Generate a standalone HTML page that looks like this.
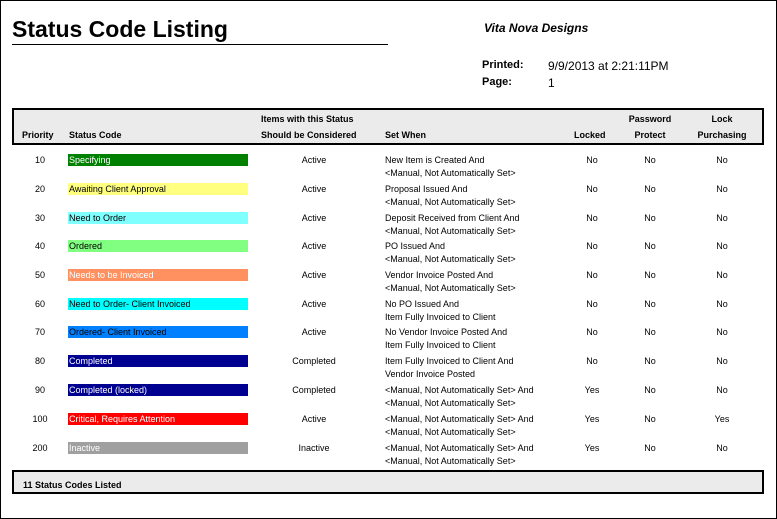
<!DOCTYPE html>
<html><head><meta charset="utf-8"><style>
*{margin:0;padding:0;box-sizing:border-box}
body{width:777px;height:519px;position:relative;background:#fff;font-family:"Liberation Sans",Arial,sans-serif;color:#000;overflow:hidden}
.a{position:absolute;white-space:nowrap}
.frame{position:absolute;left:0;top:0;width:777px;height:519px;border:1px solid #000}
.box{position:absolute;left:12px;width:752px;background:#ebebeb;border:2px solid #000}
.h{font-size:9px;font-weight:bold;line-height:13px}
.r{font-size:9px;line-height:13px}
.bar{position:absolute;left:68px;width:180px;height:12px;font-size:9px;line-height:12px;padding-left:1px;white-space:nowrap}
.c{text-align:center}
.rows{position:absolute;left:0;top:1px;width:777px;height:470px}
</style></head><body>
<div class="frame"></div>
<div class="a" style="left:12px;top:14px;font-size:23px;font-weight:bold;line-height:30px">Status Code Listing</div>
<div class="a" style="left:12px;top:44px;width:376px;height:1px;background:#000"></div>
<div class="a" style="left:484px;top:21px;font-size:12px;font-weight:bold;font-style:italic">Vita Nova Designs</div>
<div class="a" style="left:482px;top:59px;font-size:11px;font-weight:bold">Printed:</div>
<div class="a" style="left:548px;top:59px;font-size:12px">9/9/2013 at 2:21:11PM</div>
<div class="a" style="left:482px;top:76px;font-size:11px;font-weight:bold">Page:</div>
<div class="a" style="left:548px;top:76px;font-size:12px">1</div>

<div class="box" style="top:108px;height:37px"></div>
<div class="a h" style="left:22px;top:129px">Priority</div>
<div class="a h" style="left:69px;top:129px">Status Code</div>
<div class="a h" style="left:261px;top:113px">Items with this Status</div>
<div class="a h" style="left:261px;top:129px">Should be Considered</div>
<div class="a h" style="left:385px;top:129px">Set When</div>
<div class="a h" style="left:574px;top:129px">Locked</div>
<div class="a h c" style="left:615px;width:70px;top:113px">Password</div>
<div class="a h c" style="left:615px;width:70px;top:129px">Protect</div>
<div class="a h c" style="left:687px;width:70px;top:113px">Lock</div>
<div class="a h c" style="left:687px;width:70px;top:129px">Purchasing</div>

<div class="rows">
<div class="a r c" style="left:20px;width:40px;top:153px">10</div>
<div class="bar" style="top:153px;background:#008000;color:#fff">Specifying</div>
<div class="a r c" style="left:274px;width:80px;top:153px">Active</div>
<div class="a r" style="left:385px;top:153px">New Item is Created And<br>&lt;Manual, Not Automatically Set&gt;</div>
<div class="a r c" style="left:572px;width:40px;top:153px">No</div><div class="a r c" style="left:630px;width:40px;top:153px">No</div><div class="a r c" style="left:702px;width:40px;top:153px">No</div>

<div class="a r c" style="left:20px;width:40px;top:182px">20</div>
<div class="bar" style="top:182px;background:#ffff80;color:#000">Awaiting Client Approval</div>
<div class="a r c" style="left:274px;width:80px;top:182px">Active</div>
<div class="a r" style="left:385px;top:182px">Proposal Issued And<br>&lt;Manual, Not Automatically Set&gt;</div>
<div class="a r c" style="left:572px;width:40px;top:182px">No</div><div class="a r c" style="left:630px;width:40px;top:182px">No</div><div class="a r c" style="left:702px;width:40px;top:182px">No</div>

<div class="a r c" style="left:20px;width:40px;top:211px">30</div>
<div class="bar" style="top:211px;background:#80ffff;color:#000">Need to Order</div>
<div class="a r c" style="left:274px;width:80px;top:211px">Active</div>
<div class="a r" style="left:385px;top:211px">Deposit Received from Client And<br>&lt;Manual, Not Automatically Set&gt;</div>
<div class="a r c" style="left:572px;width:40px;top:211px">No</div><div class="a r c" style="left:630px;width:40px;top:211px">No</div><div class="a r c" style="left:702px;width:40px;top:211px">No</div>

<div class="a r c" style="left:20px;width:40px;top:239px">40</div>
<div class="bar" style="top:239px;background:#80ff80;color:#000">Ordered</div>
<div class="a r c" style="left:274px;width:80px;top:239px">Active</div>
<div class="a r" style="left:385px;top:239px">PO Issued And<br>&lt;Manual, Not Automatically Set&gt;</div>
<div class="a r c" style="left:572px;width:40px;top:239px">No</div><div class="a r c" style="left:630px;width:40px;top:239px">No</div><div class="a r c" style="left:702px;width:40px;top:239px">No</div>

<div class="a r c" style="left:20px;width:40px;top:268px">50</div>
<div class="bar" style="top:268px;background:#ff9060;color:#fff">Needs to be Invoiced</div>
<div class="a r c" style="left:274px;width:80px;top:268px">Active</div>
<div class="a r" style="left:385px;top:268px">Vendor Invoice Posted And<br>&lt;Manual, Not Automatically Set&gt;</div>
<div class="a r c" style="left:572px;width:40px;top:268px">No</div><div class="a r c" style="left:630px;width:40px;top:268px">No</div><div class="a r c" style="left:702px;width:40px;top:268px">No</div>

<div class="a r c" style="left:20px;width:40px;top:297px">60</div>
<div class="bar" style="top:297px;background:#00ffff;color:#000">Need to Order- Client Invoiced</div>
<div class="a r c" style="left:274px;width:80px;top:297px">Active</div>
<div class="a r" style="left:385px;top:297px">No PO Issued And<br>Item Fully Invoiced to Client</div>
<div class="a r c" style="left:572px;width:40px;top:297px">No</div><div class="a r c" style="left:630px;width:40px;top:297px">No</div><div class="a r c" style="left:702px;width:40px;top:297px">No</div>

<div class="a r c" style="left:20px;width:40px;top:325px">70</div>
<div class="bar" style="top:325px;background:#0080ff;color:#000">Ordered- Client Invoiced</div>
<div class="a r c" style="left:274px;width:80px;top:325px">Active</div>
<div class="a r" style="left:385px;top:325px">No Vendor Invoice Posted And<br>Item Fully Invoiced to Client</div>
<div class="a r c" style="left:572px;width:40px;top:325px">No</div><div class="a r c" style="left:630px;width:40px;top:325px">No</div><div class="a r c" style="left:702px;width:40px;top:325px">No</div>

<div class="a r c" style="left:20px;width:40px;top:354px">80</div>
<div class="bar" style="top:354px;background:#000090;color:#fff">Completed</div>
<div class="a r c" style="left:274px;width:80px;top:354px">Completed</div>
<div class="a r" style="left:385px;top:354px">Item Fully Invoiced to Client And<br>Vendor Invoice Posted</div>
<div class="a r c" style="left:572px;width:40px;top:354px">No</div><div class="a r c" style="left:630px;width:40px;top:354px">No</div><div class="a r c" style="left:702px;width:40px;top:354px">No</div>

<div class="a r c" style="left:20px;width:40px;top:383px">90</div>
<div class="bar" style="top:383px;background:#000090;color:#fff">Completed (locked)</div>
<div class="a r c" style="left:274px;width:80px;top:383px">Completed</div>
<div class="a r" style="left:385px;top:383px">&lt;Manual, Not Automatically Set&gt; And<br>&lt;Manual, Not Automatically Set&gt;</div>
<div class="a r c" style="left:572px;width:40px;top:383px">Yes</div><div class="a r c" style="left:630px;width:40px;top:383px">No</div><div class="a r c" style="left:702px;width:40px;top:383px">No</div>

<div class="a r c" style="left:20px;width:40px;top:412px">100</div>
<div class="bar" style="top:412px;background:#ff0000;color:#fff">Critical, Requires Attention</div>
<div class="a r c" style="left:274px;width:80px;top:412px">Active</div>
<div class="a r" style="left:385px;top:412px">&lt;Manual, Not Automatically Set&gt; And<br>&lt;Manual, Not Automatically Set&gt;</div>
<div class="a r c" style="left:572px;width:40px;top:412px">Yes</div><div class="a r c" style="left:630px;width:40px;top:412px">No</div><div class="a r c" style="left:702px;width:40px;top:412px">Yes</div>

<div class="a r c" style="left:20px;width:40px;top:441px">200</div>
<div class="bar" style="top:441px;background:#a0a0a0;color:#fff">Inactive</div>
<div class="a r c" style="left:274px;width:80px;top:441px">Inactive</div>
<div class="a r" style="left:385px;top:441px">&lt;Manual, Not Automatically Set&gt; And<br>&lt;Manual, Not Automatically Set&gt;</div>
<div class="a r c" style="left:572px;width:40px;top:441px">Yes</div><div class="a r c" style="left:630px;width:40px;top:441px">No</div><div class="a r c" style="left:702px;width:40px;top:441px">No</div>
</div>

<div class="box" style="top:470px;height:24px"></div>
<div class="a h" style="left:23px;top:479px">11 Status Codes Listed</div>
</body></html>
